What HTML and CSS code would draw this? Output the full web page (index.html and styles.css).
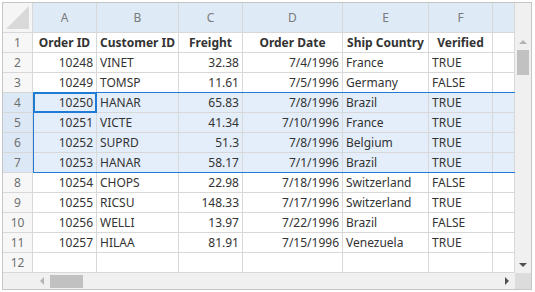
FILE: index.html
```html
<!DOCTYPE html>
<html>
<head>
<meta charset="utf-8">
<link rel="stylesheet" href="styles.css">
</head>
<body>
<div class="sheet">
  <div class="cells">
    <div class="c corner"><span class="tri"></span></div>
    <div class="c ch">A</div><div class="c ch">B</div><div class="c ch">C</div><div class="c ch">D</div><div class="c ch">E</div><div class="c ch">F</div><div class="c ch"></div>

    <div class="c rh">1</div><div class="c hd">Order ID</div><div class="c hd">Customer ID</div><div class="c hd">Freight</div><div class="c hd">Order Date</div><div class="c hd">Ship Country</div><div class="c hd">Verified</div><div class="c"></div>

    <div class="c rh">2</div><div class="c n">10248</div><div class="c">VINET</div><div class="c n">32.38</div><div class="c n">7/4/1996</div><div class="c">France</div><div class="c">TRUE</div><div class="c"></div>
    <div class="c rh">3</div><div class="c n">10249</div><div class="c">TOMSP</div><div class="c n">11.61</div><div class="c n">7/5/1996</div><div class="c">Germany</div><div class="c">FALSE</div><div class="c"></div>

    <div class="c rh sel">4</div><div class="c n sel">10250</div><div class="c sel">HANAR</div><div class="c n sel">65.83</div><div class="c n sel">7/8/1996</div><div class="c sel">Brazil</div><div class="c sel">TRUE</div><div class="c sel"></div>
    <div class="c rh sel">5</div><div class="c n sel">10251</div><div class="c sel">VICTE</div><div class="c n sel">41.34</div><div class="c n sel">7/10/1996</div><div class="c sel">France</div><div class="c sel">TRUE</div><div class="c sel"></div>
    <div class="c rh sel">6</div><div class="c n sel">10252</div><div class="c sel">SUPRD</div><div class="c n sel">51.3</div><div class="c n sel">7/8/1996</div><div class="c sel">Belgium</div><div class="c sel">TRUE</div><div class="c sel"></div>
    <div class="c rh sel">7</div><div class="c n sel">10253</div><div class="c sel">HANAR</div><div class="c n sel">58.17</div><div class="c n sel">7/1/1996</div><div class="c sel">Brazil</div><div class="c sel">TRUE</div><div class="c sel"></div>

    <div class="c rh">8</div><div class="c n">10254</div><div class="c">CHOPS</div><div class="c n">22.98</div><div class="c n">7/18/1996</div><div class="c">Switzerland</div><div class="c">FALSE</div><div class="c"></div>
    <div class="c rh">9</div><div class="c n">10255</div><div class="c">RICSU</div><div class="c n">148.33</div><div class="c n">7/17/1996</div><div class="c">Switzerland</div><div class="c">TRUE</div><div class="c"></div>
    <div class="c rh">10</div><div class="c n">10256</div><div class="c">WELLI</div><div class="c n">13.97</div><div class="c n">7/22/1996</div><div class="c">Brazil</div><div class="c">FALSE</div><div class="c"></div>
    <div class="c rh">11</div><div class="c n">10257</div><div class="c">HILAA</div><div class="c n">81.91</div><div class="c n">7/15/1996</div><div class="c">Venezuela</div><div class="c">TRUE</div><div class="c"></div>
    <div class="c rh">12</div><div class="c"></div><div class="c"></div><div class="c"></div><div class="c"></div><div class="c"></div><div class="c"></div><div class="c"></div>

    <div class="selbox"></div>
    <div class="active"></div>
  </div>

  <div class="vscroll">
    <div class="vtop"></div>
    <div class="btn"><span class="arr up"></span></div>
    <div class="vtrack"><div class="vthumb"></div></div>
    <div class="btn"><span class="arr down"></span></div>
  </div>

  <div class="hscroll">
    <div class="hleft"></div>
    <div class="hbtn"><span class="arr left"></span></div>
    <div class="htrack"><div class="hthumb"></div></div>
    <div class="hbtn"><span class="arr right"></span></div>
  </div>

  <div class="sc-corner"></div>
</div>
</body>
</html>
```

FILE: styles.css
```css
html, body {
  margin: 0;
  padding: 0;
  background: #ffffff;
}

body {
  padding: 2px;
  font-family: "Noto Sans", "Open Sans", sans-serif;
  font-size: 12px;
  color: #333333;
}

.sheet {
  box-sizing: border-box;
  width: 530px;
  height: 288px;
  border: 1px solid #c6c6c6;
  display: grid;
  grid-template-columns: 512px 16px;
  grid-template-rows: 270px 16px;
  overflow: hidden;
}

.cells {
  position: relative;
  overflow: hidden;
  display: grid;
  grid-template-columns: 30px 64px 82px 64px 100px 86px 64px 22px;
  grid-template-rows: 30px repeat(12, 20px);
}

.c {
  box-sizing: border-box;
  border-right: 1px solid #d8d8d8;
  border-bottom: 1px solid #d8d8d8;
  padding: 0 3px;
  line-height: 19px;
  white-space: nowrap;
  overflow: hidden;
  background: #ffffff;
}

.n {
  text-align: right;
}

.hd {
  font-weight: bold;
  text-align: center;
  padding: 0;
}

.corner {
  position: relative;
  background: #f5f5f5;
  padding: 0;
}

.tri {
  position: absolute;
  right: 3px;
  bottom: 3px;
  width: 0;
  height: 0;
  border-left: 23px solid transparent;
  border-bottom: 23px solid #d9d9d9;
}

.ch {
  background: #dfeaf7;
  color: #7a7a7a;
  text-align: center;
  line-height: 29px;
  padding: 0;
}

.rh {
  background: #f7f7f7;
  color: #707070;
  text-align: center;
  padding: 0;
}

.c.sel {
  background: #e3eefa;
}

.rh.sel {
  background: #dce8f6;
}

.selbox {
  position: absolute;
  left: 30px;
  top: 89px;
  width: 490px;
  height: 81px;
  box-sizing: border-box;
  border: 1px solid #1f7bd3;
  pointer-events: none;
}

.active {
  position: absolute;
  left: 30px;
  top: 89px;
  width: 64px;
  height: 21px;
  box-sizing: border-box;
  border: 2px solid #1f7bd3;
  pointer-events: none;
}

.vscroll {
  display: flex;
  flex-direction: column;
  background: #f0f0f0;
}

.vtop {
  height: 30px;
  flex: none;
}

.btn {
  height: 17px;
  flex: none;
  display: flex;
  align-items: center;
  justify-content: center;
}

.vtrack {
  flex: 1;
}

.vthumb {
  margin: 0 2px;
  height: 25px;
  background: #c1c1c1;
}

.hscroll {
  display: flex;
  background: #f0f0f0;
}

.hleft {
  width: 30px;
  flex: none;
}

.hbtn {
  width: 17px;
  flex: none;
  display: flex;
  align-items: center;
  justify-content: center;
}

.htrack {
  flex: 1;
  display: flex;
  align-items: center;
}

.hthumb {
  width: 33px;
  height: 13px;
  background: #c1c1c1;
}

.sc-corner {
  background: #dcdcdc;
}

.arr {
  width: 0;
  height: 0;
}

.arr.up {
  border-left: 4px solid transparent;
  border-right: 4px solid transparent;
  border-bottom: 4px solid #b4b4b4;
}

.arr.down {
  border-left: 4px solid transparent;
  border-right: 4px solid transparent;
  border-top: 4px solid #505050;
}

.arr.left {
  border-top: 4px solid transparent;
  border-bottom: 4px solid transparent;
  border-right: 4px solid #b4b4b4;
}

.arr.right {
  border-top: 4px solid transparent;
  border-bottom: 4px solid transparent;
  border-left: 4px solid #505050;
}
```
